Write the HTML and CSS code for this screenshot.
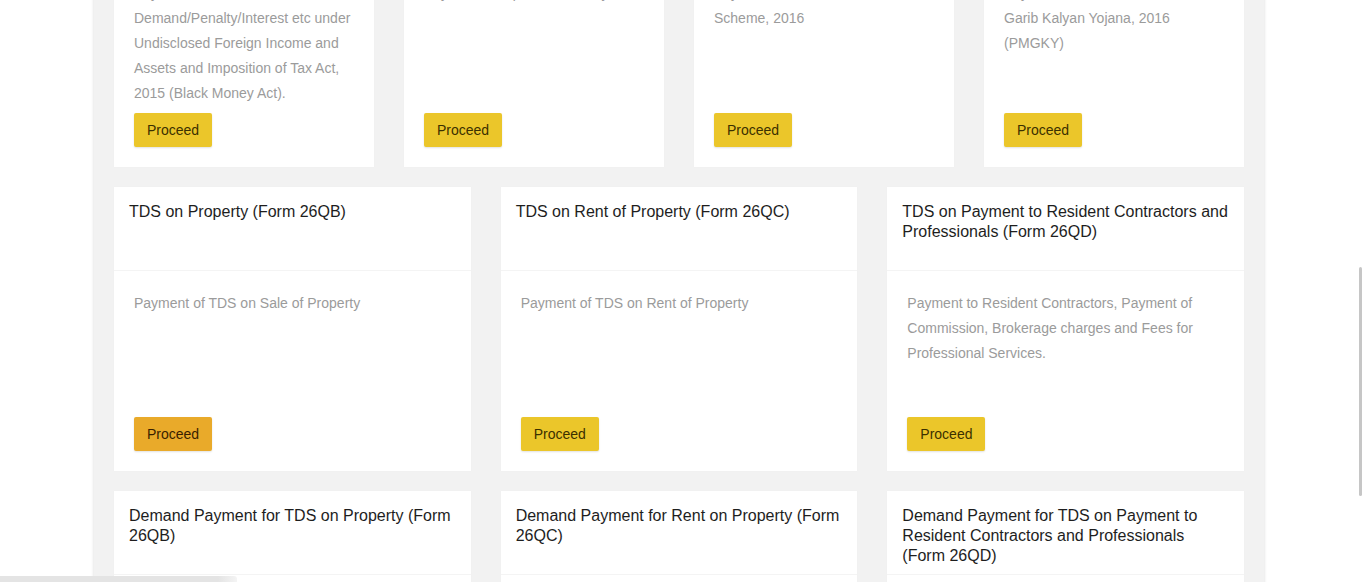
FILE: index.html
```
<!DOCTYPE html>
<html lang="en">
<head>
  <meta charset="UTF-8">
  <meta name="viewport" content="width=device-width, initial-scale=1.0">
  <title>e-Pay Tax</title>
  <link rel="stylesheet" href="styles.css">
</head>
<body>
  <div class="page">
    <div class="container">
      <div class="row row--four">
        <div class="card">
          <div class="card__head">Payment under Black Money Act, 2015</div>
          <div class="card__body">
            <p class="card__text">Payment of Tax and Demand/Penalty/Interest etc under Undisclosed Foreign Income and Assets and Imposition of Tax Act, 2015 (Black Money Act).</p>
            <a class="btn">Proceed</a>
          </div>
        </div>
        <div class="card">
          <div class="card__head">Equalisation Levy</div>
          <div class="card__body">
            <p class="card__text">Payment of Equalisation Levy</p>
            <a class="btn">Proceed</a>
          </div>
        </div>
        <div class="card">
          <div class="card__head">Income Declaration Scheme, 2016</div>
          <div class="card__body">
            <p class="card__text">Payment under Income Declaration Scheme, 2016</p>
            <a class="btn">Proceed</a>
          </div>
        </div>
        <div class="card">
          <div class="card__head">Pradhan Mantri Garib Kalyan Yojana, 2016</div>
          <div class="card__body">
            <p class="card__text">Payment under Pradhan Mantri Garib Kalyan Yojana, 2016 (PMGKY)</p>
            <a class="btn">Proceed</a>
          </div>
        </div>
      </div>

      <div class="row row--three">
        <div class="card">
          <div class="card__head">TDS on Property (Form 26QB)</div>
          <div class="card__body">
            <p class="card__text">Payment of TDS on Sale of Property</p>
            <a class="btn btn--active">Proceed</a>
          </div>
        </div>
        <div class="card">
          <div class="card__head">TDS on Rent of Property (Form 26QC)</div>
          <div class="card__body">
            <p class="card__text">Payment of TDS on Rent of Property</p>
            <a class="btn">Proceed</a>
          </div>
        </div>
        <div class="card">
          <div class="card__head">TDS on Payment to Resident Contractors and Professionals (Form 26QD)</div>
          <div class="card__body">
            <p class="card__text">Payment to Resident Contractors, Payment of Commission, Brokerage charges and Fees for Professional Services.</p>
            <a class="btn">Proceed</a>
          </div>
        </div>
      </div>

      <div class="row row--three">
        <div class="card">
          <div class="card__head">Demand Payment for TDS on Property (Form 26QB)</div>
          <div class="card__body">
            <p class="card__text">Payment of Demand for TDS on Sale of Property</p>
            <a class="btn">Proceed</a>
          </div>
        </div>
        <div class="card">
          <div class="card__head">Demand Payment for Rent on Property (Form 26QC)</div>
          <div class="card__body">
            <p class="card__text">Payment of Demand for TDS on Rent of Property</p>
            <a class="btn">Proceed</a>
          </div>
        </div>
        <div class="card">
          <div class="card__head">Demand Payment for TDS on Payment to Resident Contractors and Professionals (Form 26QD)</div>
          <div class="card__body">
            <p class="card__text">Payment of Demand for TDS on Payment to Resident Contractors and Professionals</p>
            <a class="btn">Proceed</a>
          </div>
        </div>
      </div>
    </div>
  </div>

  <div class="scroll-thumb"></div>
  <div class="status-bar"></div>
</body>
</html>
```

FILE: styles.css
```
* { box-sizing: border-box; }
html, body {
  margin: 0;
  height: 100%;
  overflow: hidden;
}
body {
  font-family: 'Liberation Sans', Arial, sans-serif;
  background: #fff;
  padding-right: 8px;
}
.page {
  margin-top: -143px;
}
.container {
  width: 1170px;
  margin: 0 auto;
  padding: 20px;
  background: #f2f2f2;
  box-shadow: 0 0 3px rgba(0, 0, 0, 0.16);
}
.row {
  display: grid;
  gap: 30px;
  margin-bottom: 20px;
}
.row--four { grid-template-columns: repeat(4, 1fr); }
.row--three { grid-template-columns: repeat(3, 1fr); }
.card {
  background: #fff;
  display: flex;
  flex-direction: column;
  box-shadow: 0 0 1px rgba(0, 0, 0, 0.04);
}
.card__head {
  min-height: 84px;
  padding: 15px 15px 8px;
  font-size: 16px;
  line-height: 20px;
  color: #1e1e1e;
  border-bottom: 1px solid #f4f4f4;
}
.card__body {
  flex: 1;
  display: flex;
  flex-direction: column;
  align-items: flex-start;
  padding: 20px;
}
.card__text {
  margin: 0 0 7px;
  min-height: 119px;
  flex: 1;
  font-size: 14px;
  line-height: 25px;
  color: #9b9b9b;
}
.btn {
  display: inline-block;
  height: 34px;
  line-height: 34px;
  padding: 0 13px;
  font-size: 14px;
  color: #3b3000;
  background: #ebc62a;
  border-radius: 2px;
  box-shadow: 0 1px 2px rgba(0, 0, 0, 0.12);
  cursor: pointer;
}
.btn--active {
  background: #e9aa2a;
  color: #3a1f00;
}
.scroll-thumb {
  position: fixed;
  right: 4px;
  top: 267px;
  width: 3px;
  height: 229px;
  background: #c6c6c6;
  border-radius: 2px;
}
.status-bar {
  position: fixed;
  left: 0;
  bottom: 0;
  width: 237px;
  height: 6px;
  background: linear-gradient(to right, #e4e4e4 92%, #f4f4f4);
  border-top-right-radius: 3px;
}
```
